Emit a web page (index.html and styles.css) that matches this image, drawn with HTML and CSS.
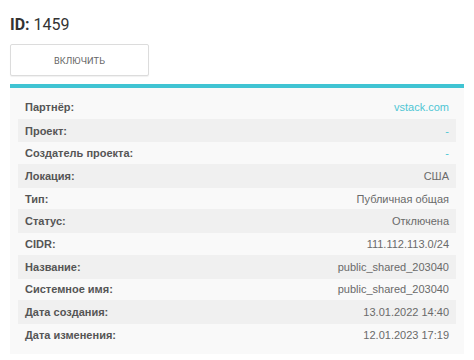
FILE: index.html
```html
<!DOCTYPE html>
<html lang="ru">
<head>
<meta charset="utf-8">
<link rel="stylesheet" href="styles.css">
</head>
<body>
<div class="page">
  <h1 class="title"><b>ID:</b> 1459</h1>
  <button class="btn">ВКЛЮЧИТЬ</button>
  <div class="card">
    <div class="row"><span class="k">Партнёр:</span><a class="v link">vstack.com</a></div>
    <div class="row"><span class="k">Проект:</span><span class="v link">-</span></div>
    <div class="row"><span class="k">Создатель проекта:</span><span class="v link">-</span></div>
    <div class="row"><span class="k">Локация:</span><span class="v">США</span></div>
    <div class="row"><span class="k">Тип:</span><span class="v">Публичная общая</span></div>
    <div class="row"><span class="k">Статус:</span><span class="v">Отключена</span></div>
    <div class="row"><span class="k">CIDR:</span><span class="v">111.112.113.0/24</span></div>
    <div class="row"><span class="k">Название:</span><span class="v">public_shared_203040</span></div>
    <div class="row"><span class="k">Системное имя:</span><span class="v">public_shared_203040</span></div>
    <div class="row"><span class="k">Дата создания:</span><span class="v">13.01.2022 14:40</span></div>
    <div class="row"><span class="k">Дата изменения:</span><span class="v">12.01.2023 17:19</span></div>
  </div>
</div>
</body>
</html>
```
FILE: styles.css
```css
* { box-sizing: border-box; }
body { margin: 0; background: #fff; font-family: "Liberation Sans", Arial, sans-serif; }
.page { padding: 14px 10px 0 10px; display: flex; flex-direction: column; align-items: flex-start; }
.title { margin: 0; font-family: Roboto, sans-serif; font-size: 16px; font-weight: 400; color: #333; line-height: 21px; }
.title b { font-weight: 700; }
.btn {
  margin-top: 9px; width: 139px; height: 32px; background: #fff;
  border: 1px solid #dcdcdc; border-radius: 2px; box-shadow: 0 1px 1px rgba(0,0,0,0.06);
  font-family: Roboto, sans-serif; font-size: 9.2px; color: #666; padding: 0; letter-spacing: 0.1px;
}
.card {
  margin-top: 8px; align-self: stretch; background: #f9f9f9;
  border-top: 4px solid #40c4d3; padding: 8px 8px 8px 8px;
}
.row {
  display: flex; justify-content: space-between; align-items: center;
  height: 22.7px; padding: 0 7px; font-size: 11px; color: #666;
  border-top: 1px solid #f0f0f0;
}
.row:first-child { border-top: none; }
.row:nth-child(even) { background: #f0f0f0; }
.k { font-weight: 700; color: #555; }
.v { color: #6a6a6a; }
.link { color: #4fc6d4; }
```
